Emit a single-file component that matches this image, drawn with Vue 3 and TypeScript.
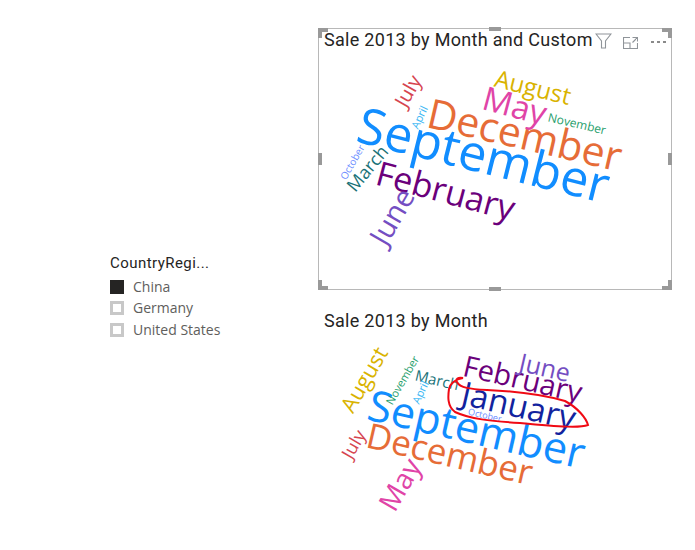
<script setup lang="ts">
interface Word { t: string; x: number; y: number; r: number; s: number; c: string }
interface Visual { key: string; title: string; x: number; y: number; w: number; h: number; words: Word[] }

const blue = '#118DFF', navy = '#12239E', orange = '#E66C37', purple = '#6B007B', pink = '#E044A7'
const violet = '#744EC2', gold = '#D9B300', red = '#D64550', teal = '#197278', green = '#1F9E6B', sky = '#3DB8F4', peri = '#6A8CFF'

const visuals: Visual[] = [
  { key: 'top', title: 'Sale 2013 by Month and Custom', x: 318, y: 28, w: 354, h: 262, words: [
    { t: 'September', x: 484, y: 154, r: 14, s: 50, c: blue },
    { t: 'December', x: 525, y: 134, r: 13, s: 41, c: orange },
    { t: 'February', x: 446, y: 190, r: 15, s: 34, c: purple },
    { t: 'May', x: 515, y: 105, r: 15, s: 33, c: pink },
    { t: 'August', x: 533, y: 87, r: 14, s: 24, c: gold },
    { t: 'November', x: 577, y: 124, r: 13, s: 12, c: green },
    { t: 'July', x: 408, y: 91, r: -60, s: 20, c: red },
    { t: 'April', x: 419, y: 117, r: -65, s: 11, c: sky },
    { t: 'March', x: 367, y: 168, r: -50, s: 18, c: teal },
    { t: 'October', x: 352, y: 162, r: -60, s: 10, c: peri },
    { t: 'June', x: 391, y: 216, r: -60, s: 29, c: violet },
  ] },
  { key: 'bottom', title: 'Sale 2013 by Month', x: 319, y: 306, w: 352, h: 220, words: [
    { t: 'September', x: 477, y: 428, r: 13, s: 43, c: blue },
    { t: 'December', x: 450, y: 453, r: 13, s: 35, c: orange },
    { t: 'February', x: 523, y: 378, r: 13, s: 29, c: purple },
    { t: 'January', x: 519, y: 405, r: 13, s: 33, c: navy },
    { t: 'June', x: 545, y: 367, r: 13, s: 25, c: violet },
    { t: 'March', x: 437, y: 380, r: 13, s: 15, c: teal },
    { t: 'October', x: 485, y: 415, r: 13, s: 9, c: peri },
    { t: 'August', x: 363, y: 379, r: -60, s: 22, c: gold },
    { t: 'November', x: 402, y: 380, r: -60, s: 11, c: green },
    { t: 'April', x: 420, y: 392, r: -65, s: 11, c: sky },
    { t: 'July', x: 353, y: 444, r: -60, s: 18, c: red },
    { t: 'May', x: 399, y: 484, r: -60, s: 28, c: pink },
  ] },
]

const legend = [
  { label: 'China', on: true },
  { label: 'Germany', on: false },
  { label: 'United States', on: false },
]

function wordStyle(v: Visual, w: Word) {
  return {
    left: `${w.x - v.x}px`,
    top: `${w.y - v.y}px`,
    fontSize: `${w.s}px`,
    color: w.c,
    transform: `translate(-50%, -50%) rotate(${w.r}deg)`,
  }
}
function visualStyle(v: Visual) {
  return { left: `${v.x}px`, top: `${v.y}px`, width: `${v.w}px`, height: `${v.h}px` }
}
</script>

<template>
  <div class="canvas">
    <section class="legend">
      <h3 class="legend-title">CountryRegi...</h3>
      <ul class="legend-list">
        <li v-for="item in legend" :key="item.label" class="legend-item">
          <span class="box" :class="{ on: item.on }"></span>
          <span>{{ item.label }}</span>
        </li>
      </ul>
    </section>

    <section v-for="v in visuals" :key="v.key" class="visual" :class="{ selected: v.key === 'top' }" :style="visualStyle(v)">
      <h2 class="title">{{ v.title }}</h2>
      <span v-for="w in v.words" :key="w.t" class="word" :style="wordStyle(v, w)">{{ w.t }}</span>

      <template v-if="v.key === 'top'">
        <div class="tools">
          <svg class="tool" width="17" height="16" viewBox="0 0 17 16" fill="none" stroke="#8f9499" stroke-width="1.1">
            <path d="M1 1 H16 L10.5 8 V15 H6.5 V8 Z" />
          </svg>
          <svg class="tool expand" width="15" height="12" viewBox="0 0 15 12" fill="none" stroke="#8f9499" stroke-width="1.1">
            <path d="M7 .5 H.5 V11.5 H14.5 V6 M.5 6 H7 V11.5 M9.5 .5 H14.5 V4.5 M14.5 .5 L9.5 5.5" />
          </svg>
          <span class="dots"><i></i><i></i><i></i></span>
        </div>
        <i class="h c tl"></i><i class="h c tr"></i><i class="h c bl"></i><i class="h c br"></i>
        <i class="h m t"></i><i class="h m b"></i><i class="h m l"></i><i class="h m r"></i>
      </template>

      <svg v-else class="scribble" width="352" height="220" viewBox="319 306 352 220" fill="none">
        <path d="M463 378 C458 377 455 379 457 382 C460 388 470 389 487 390 C510 391 540 394 565 401 C578 408 586 418 588 425 C580 428 562 427 520 423 C490 421 470 419 455 412 C447 406 448 396 449 389 C450 384 455 379 463 378 Z"
          stroke="#F00A14" stroke-width="2" />
      </svg>
    </section>
  </div>
</template>

<style scoped>
.canvas { position: relative; width: 695px; height: 550px; background: #fff; overflow: hidden; }
.legend { position: absolute; left: 110px; top: 253px; width: 130px; }
.legend-title { margin: 0 0 3px; font: 400 15px/20px Roboto, sans-serif; color: #252423; letter-spacing: .45px; }
.legend-list { list-style: none; margin: 0; padding: 0; display: flex; flex-direction: column; }
.legend-item { display: flex; align-items: center; gap: 9px; height: 21.5px; font: 400 14px/20px "Open Sans", sans-serif; color: #605E5C; }
.box { width: 14px; height: 14px; box-sizing: border-box; border: 3px solid #c8c8c8; }
.box.on { background: #252423; border-color: #252423; }
.visual { position: absolute; box-sizing: border-box; }
.visual.selected { border: 1px solid #b8b8b8; }
.title { position: absolute; left: 5px; top: 5px; margin: 0; font: 400 18px/20px Roboto, sans-serif; color: #252423; white-space: nowrap; letter-spacing: .3px; }
.selected .title { top: 1px; }
.word { position: absolute; font-family: "Open Sans", sans-serif; line-height: 1; white-space: nowrap; }
.selected .word { margin: -1px 0 0 -1px; }
.tools { position: absolute; left: 276px; top: 4px; display: flex; align-items: flex-start; gap: 11px; }
.expand { margin-top: 4px; }
.dots { display: flex; gap: 3px; margin: 8px 0 0 2px; }
.dots i { width: 3px; height: 2px; background: #8a8a8a; }
.h { position: absolute; display: block; }
.c { width: 10px; height: 10px; border: 0 solid #999; box-sizing: border-box; }
.tl { left: -1px; top: -1px; border-width: 4px 0 0 4px; }
.tr { right: -1px; top: -1px; border-width: 4px 4px 0 0; }
.bl { left: -1px; bottom: -1px; border-width: 0 0 4px 4px; }
.br { right: -1px; bottom: -1px; border-width: 0 4px 4px 0; }
.m { background: #999; }
.t, .b { width: 12px; height: 4px; left: 170px; }
.t { top: -2px; }
.b { bottom: -2px; }
.l, .r { width: 4px; height: 12px; top: 124px; }
.l { left: -1px; }
.r { right: -1px; }
.scribble { position: absolute; left: 0; top: 0; pointer-events: none; }
</style>
